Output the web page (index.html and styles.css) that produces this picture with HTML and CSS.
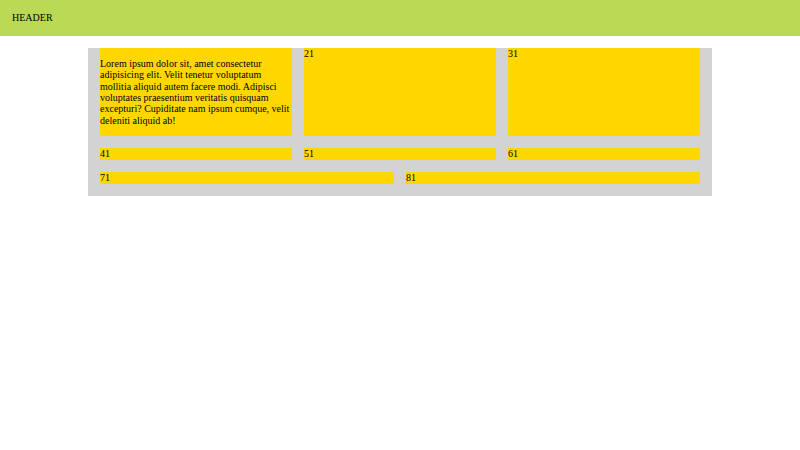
FILE: index.html
```html
<!DOCTYPE html>
<html>
<head>
<meta charset="utf-8">
<link rel="stylesheet" href="styles.css">
</head>
<body>
<header class="header">HEADER</header>
<main class="grid">
  <div class="cell span2"><p class="text">Lorem ipsum dolor sit, amet consectetur adipisicing elit. Velit tenetur voluptatum mollitia aliquid autem facere modi. Adipisci voluptates praesentium veritatis quisquam excepturi? Cupiditate nam ipsum cumque, velit deleniti aliquid ab!</p></div>
  <div class="cell span2">21</div>
  <div class="cell span2">31</div>
  <div class="cell span2">41</div>
  <div class="cell span2">51</div>
  <div class="cell span2">61</div>
  <div class="cell span3">71</div>
  <div class="cell span3">81</div>
</main>
</body>
</html>
```
FILE: styles.css
```css
html, body {
  margin: 0;
  padding: 0;
  background: #ffffff;
}
body {
  font-family: "Liberation Serif", "Times New Roman", serif;
  font-size: 10px;
  color: #000;
}
.header {
  background: #bada55;
  padding: 12px 12px 13px;
  height: 11px;
  line-height: 11px;
}
.grid {
  width: 600px;
  margin: 12px auto 0;
  padding: 0 12px 12px;
  background: #d3d3d3;
  display: grid;
  grid-template-columns: repeat(6, 1fr);
  gap: 12px;
  font-size: 10px;
}
.cell {
  background: #ffd700;
  line-height: 12px;
}
.span2 { grid-column: span 2; }
.span3 { grid-column: span 3; }
.text {
  margin: 10px 0;
  line-height: 11.34px;
}
```
